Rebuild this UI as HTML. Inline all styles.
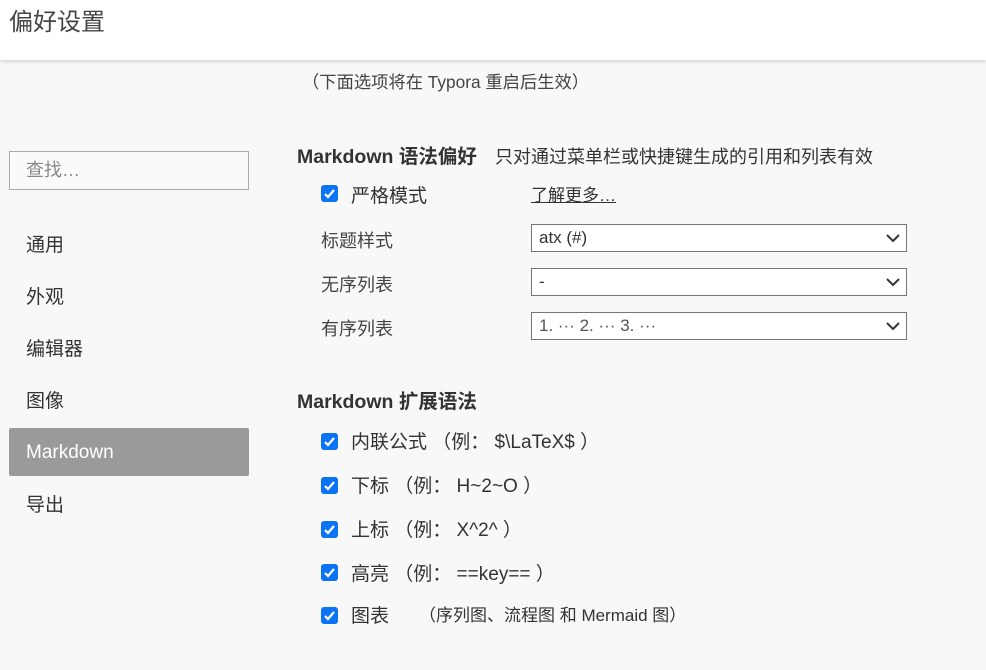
<!DOCTYPE html><html><head><meta charset="utf-8"><style>
body{margin:0;width:986px;height:670px;background:#f8f8f8;font-family:"Liberation Sans","Noto Sans CJK SC",sans-serif;color:#333;position:relative;overflow:hidden}
.a{position:absolute;white-space:nowrap;line-height:1.2}
.hdr{position:absolute;left:0;top:0;width:986px;height:60px;background:#fff;box-shadow:0 1px 4px rgba(0,0,0,.2)}
.nav{font-size:19px;left:26px;color:#333}
.cb{position:absolute;width:17px;height:17px;background:#0b74f5;border-radius:3px}
.cb svg{position:absolute;left:2px;top:2px}
.t{font-size:19px;color:#333}
.lb{font-size:18px;color:#444;left:321px}
.sel{position:absolute;left:531px;width:374px;height:26px;border:1px solid #767676;background:#fff;font-size:17px;line-height:26px;box-sizing:content-box}
.sel span{position:absolute;left:7px}
.sel svg{position:absolute;right:6px;top:9px}
</style></head><body>
<div class="hdr"></div>
<div class="a" style="left:9px;top:9px;font-size:24px;color:#444">偏好设置</div>
<div class="a" style="left:302px;top:72px;font-size:17.3px;color:#444">（下面选项将在 Typora 重启后生效）</div>
<div class="a" style="left:9px;top:151px;width:238px;height:37px;border:1px solid #aaa;background:#fafafa"></div>
<div class="a" style="left:26px;top:160px;font-size:18px;color:#888">查找…</div>
<div class="a nav" style="top:235px">通用</div>
<div class="a nav" style="top:287px">外观</div>
<div class="a nav" style="top:339px">编辑器</div>
<div class="a nav" style="top:391px">图像</div>
<div class="a" style="left:9px;top:428px;width:240px;height:48px;background:#9a9a9a;border-radius:2px"></div>
<div class="a nav" style="top:442px;color:#fff">Markdown</div>
<div class="a nav" style="top:495px">导出</div>
<div class="a" style="left:297px;top:146px;font-size:19.5px;font-weight:bold;color:#333">Markdown 语法偏好</div>
<div class="a" style="left:495px;top:147px;font-size:18px;color:#333">只对通过菜单栏或快捷键生成的引用和列表有效</div>
<div class="cb" style="left:321px;top:185px"><svg width="13" height="13" viewBox="0 0 13 13"><path d="M2 7l3 3 6-7" stroke="#fff" stroke-width="2.2" fill="none"/></svg></div>
<div class="a t" style="left:351px;top:186px">严格模式</div>
<div class="a" style="left:531px;top:186px;font-size:17px;text-decoration:underline;color:#333">了解更多…</div>
<div class="a lb" style="top:231px">标题样式</div>
<div class="a lb" style="top:275px">无序列表</div>
<div class="a lb" style="top:319px">有序列表</div>
<div class="sel" style="top:224px"><span>atx (#)</span><svg width="14" height="9" viewBox="0 0 14 9"><path d="M1 1l6 6 6-6" stroke="#333" stroke-width="2" fill="none"/></svg></div>
<div class="sel" style="top:268px"><span>-</span><svg width="14" height="9" viewBox="0 0 14 9"><path d="M1 1l6 6 6-6" stroke="#333" stroke-width="2" fill="none"/></svg></div>
<div class="sel" style="top:312px"><span style="color:#555">1. ··· 2. ··· 3. ···</span><svg width="14" height="9" viewBox="0 0 14 9"><path d="M1 1l6 6 6-6" stroke="#333" stroke-width="2" fill="none"/></svg></div>
<div class="a" style="left:297px;top:391px;font-size:19.5px;font-weight:bold;color:#333">Markdown 扩展语法</div>
<div class="cb" style="left:321px;top:433px"><svg width="13" height="13" viewBox="0 0 13 13"><path d="M2 7l3 3 6-7" stroke="#fff" stroke-width="2.2" fill="none"/></svg></div>
<div class="a t" style="left:351px;top:432px">内联公式 （例： $\LaTeX$ ）</div>
<div class="cb" style="left:321px;top:477px"><svg width="13" height="13" viewBox="0 0 13 13"><path d="M2 7l3 3 6-7" stroke="#fff" stroke-width="2.2" fill="none"/></svg></div>
<div class="a t" style="left:351px;top:476px">下标 （例： H~2~O ）</div>
<div class="cb" style="left:321px;top:521px"><svg width="13" height="13" viewBox="0 0 13 13"><path d="M2 7l3 3 6-7" stroke="#fff" stroke-width="2.2" fill="none"/></svg></div>
<div class="a t" style="left:351px;top:520px">上标 （例： X^2^ ）</div>
<div class="cb" style="left:321px;top:564px"><svg width="13" height="13" viewBox="0 0 13 13"><path d="M2 7l3 3 6-7" stroke="#fff" stroke-width="2.2" fill="none"/></svg></div>
<div class="a t" style="left:351px;top:564px">高亮 （例： ==key== ）</div>
<div class="cb" style="left:321px;top:607px"><svg width="13" height="13" viewBox="0 0 13 13"><path d="M2 7l3 3 6-7" stroke="#fff" stroke-width="2.2" fill="none"/></svg></div>
<div class="a t" style="left:351px;top:606px">图表</div>
<div class="a" style="left:419px;top:606px;font-size:17px;color:#333">（序列图、流程图 和 Mermaid 图）</div>
</body></html>
